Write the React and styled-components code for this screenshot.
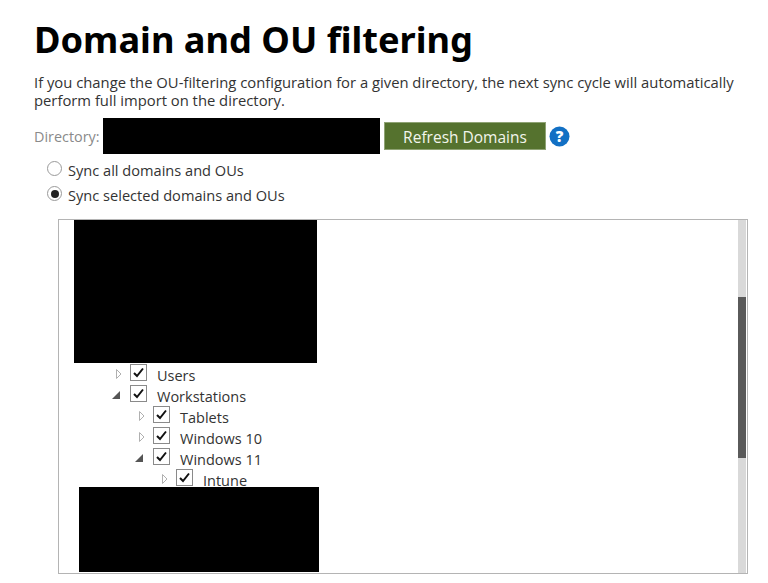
import React from "react";
import styled, { createGlobalStyle } from "styled-components";

const Global = createGlobalStyle`
  html, body { margin: 0; padding: 0; background: #fff; }
  body { font-family: "Open Sans", "Noto Sans", "Liberation Sans", sans-serif; color: #333; overflow: hidden; }
`;
const Page = styled.div`
  width: 768px; height: 583px; box-sizing: border-box; padding: 13px 20px 0 34px; overflow: hidden;
`;
const Title = styled.h1`
  margin: 0; font-size: 36.2px; line-height: 52px; font-weight: 700; color: #000;
  font-family: "Noto Sans", "Open Sans", sans-serif;
`;
const Intro = styled.p`
  margin: 8px 0 0; font-size: 14.8px; line-height: 18px; color: #333; width: 714px;
`;
const DirectoryRow = styled.div`
  display: flex; align-items: center; height: 36px; margin-top: 9px;
`;
const DirLabel = styled.span`
  width: 69px; font-size: 14.4px; color: #8a8a8a;
`;
const Redaction = styled.div`
  background: #000; flex: none; width: ${(p) => p.$w}px; height: ${(p) => p.$h}px; margin-left: ${(p) => p.$left || 0}px;
`;
const RefreshButton = styled.button`
  width: 162px; height: 28px; margin-left: 4px; padding: 2px 0 0; border: 1px solid #8fa374; background: #55722e;
  color: #f2f5ec; font: 400 15.5px "Open Sans", sans-serif;
`;
const HelpIcon = styled.svg`
  width: 21px; height: 21px; margin-left: 3px; flex: none;
`;
const RadioGroup = styled.div`
  display: flex; flex-direction: column; gap: 7px; margin: 7px 0 0 13px;
`;
const RadioRow = styled.label`
  display: flex; align-items: center; height: 18px; font-size: 14.6px; color: #333; gap: 6px;
`;
const Radio = styled.span`
  width: 15px; height: 15px; box-sizing: border-box; border: 1px solid #9a9a9a; border-radius: 50%; background: #fff;
  display: flex; align-items: center; justify-content: center; margin-top: -3px;
  &::after { content: ""; width: 8px; height: 8px; border-radius: 50%; background: ${(p) => (p.$on ? "#222" : "transparent")}; }
`;
const TreePanel = styled.div`
  display: flex; width: 690px; height: 355px; box-sizing: border-box; margin: 15px 0 0 24px; border: 1px solid #b4b4b4; overflow: hidden;
`;
const TreeArea = styled.div`
  flex: 1; min-width: 0; display: flex; flex-direction: column; overflow: hidden;
`;
const TreeRows = styled.div`
  padding-top: 2px; height: 124px; flex: none; overflow: hidden; box-sizing: border-box;
`;
const Row = styled.div`
  display: flex; align-items: center; height: 21px; margin-left: ${(p) => 53 + p.$level * 23}px;
`;
const Arrow = styled.svg`
  width: 18px; height: 10px; flex: none; margin-top: -3px;
`;
const Box = styled.span`
  width: 17px; height: 17px; box-sizing: border-box; border: 1px solid #8a8a8a; background: #fff; flex: none;
  display: flex; align-items: center; justify-content: center; margin-top: -6px;
`;
const RowLabel = styled.span`
  font-size: 14.5px; line-height: 21px; margin-left: 10px; color: #333;
`;
const Scrollbar = styled.div`
  width: 8px; flex: none; margin-right: 1px; background: #d9d9d9; padding-top: 77px; box-sizing: border-box;
`;
const Thumb = styled.div`
  height: 161px; background: #5a5a5a;
`;

const rows = [
  { label: "Users", level: 0 },
  { label: "Workstations", level: 0, open: true },
  { label: "Tablets", level: 1 },
  { label: "Windows 10", level: 1 },
  { label: "Windows 11", level: 1, open: true },
  { label: "Intune", level: 2 },
];

const Expander = ({ open }) => (
  <Arrow viewBox="0 0 18 10">
    {open ? <path d="M0 9 L8 9 L8 1 Z" fill="#555" /> : <path d="M4.5 0.5 L9 5 L4.5 9.5 Z" fill="#fff" stroke="#b0b0b0" />}
  </Arrow>
);

export default function App() {
  return (
    <Page>
      <Global />
      <Title>Domain and OU filtering</Title>
      <Intro>If you change the OU-filtering configuration for a given directory, the next sync cycle will automatically perform full import on the directory.</Intro>
      <DirectoryRow>
        <DirLabel>Directory:</DirLabel>
        <Redaction $w={277} $h={36} />
        <RefreshButton>Refresh Domains</RefreshButton>
        <HelpIcon viewBox="0 0 21 21">
          <circle cx="10.5" cy="10.5" r="10" fill="#1270c4" />
          <text x="10.5" y="15.5" textAnchor="middle" fontSize="15" fontWeight="800" fontFamily="'Open Sans', sans-serif" fill="#fff">?</text>
        </HelpIcon>
      </DirectoryRow>
      <RadioGroup>
        <RadioRow><Radio />Sync all domains and OUs</RadioRow>
        <RadioRow><Radio $on />Sync selected domains and OUs</RadioRow>
      </RadioGroup>
      <TreePanel>
        <TreeArea>
          <Redaction $w={243} $h={143} $left={15} />
          <TreeRows>
            {rows.map((r) => (
              <Row key={r.label} $level={r.level}>
                <Expander open={r.open} />
                <Box>
                  <svg width="15" height="15" viewBox="0 0 15 15">
                    <path d="M3 8 L6 11 L12 3.5" fill="none" stroke="#111" strokeWidth="2" />
                  </svg>
                </Box>
                <RowLabel>{r.label}</RowLabel>
              </Row>
            ))}
          </TreeRows>
          <Redaction $w={240} $h={85} $left={20} />
        </TreeArea>
        <Scrollbar><Thumb /></Scrollbar>
      </TreePanel>
    </Page>
  );
}
